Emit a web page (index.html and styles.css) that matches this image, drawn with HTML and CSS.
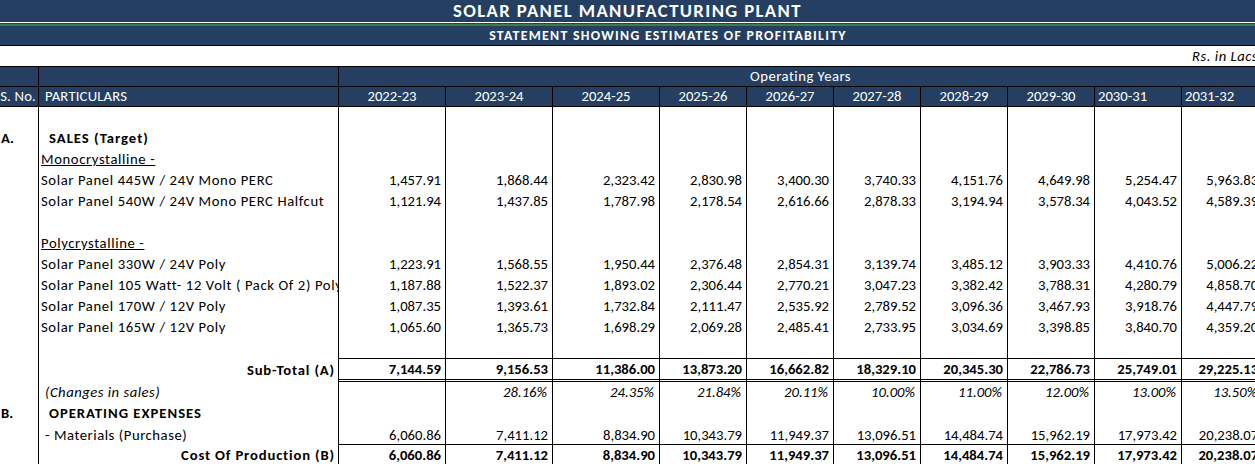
FILE: index.html
```html
<!DOCTYPE html>
<html>
<head>
<meta charset="utf-8">
<link rel="stylesheet" href="styles.css">
</head>
<body>
<div class="title">SOLAR PANEL MANUFACTURING PLANT</div>
<div class="gap"></div>
<div class="subtitle">STATEMENT SHOWING ESTIMATES OF PROFITABILITY</div>
<div class="units">Rs. in Lacs</div>
<table class="sheet">
<colgroup>
<col class="c-sno"><col class="c-part"><col class="c-w"><col class="c-w"><col class="c-w"><col class="c-n"><col class="c-n"><col class="c-n"><col class="c-n"><col class="c-n"><col class="c-n"><col class="c-last">
</colgroup>
<thead>
<tr class="h1">
<th class="vb"></th><th class="vb"></th><th colspan="10" class="oy">Operating Years</th>
</tr>
<tr class="h2">
<th class="vb sno">S. No.</th><th class="vb part">PARTICULARS</th>
<th class="vb">2022-23</th><th class="vb">2023-24</th><th class="vb">2024-25</th><th class="vb">2025-26</th><th class="vb">2026-27</th><th class="vb">2027-28</th><th class="vb">2028-29</th><th class="vb">2029-30</th><th class="vb left">2030-31</th><th class="left">2031-32</th>
</tr>
</thead>
<tbody>
<tr class="r"><td class="idx"></td><td class="lbl">&nbsp;</td><td></td><td></td><td></td><td></td><td></td><td></td><td></td><td></td><td></td><td class="end"></td></tr>
<tr class="r"><td class="idx">A.</td><td class="lbl head">SALES (Target)</td><td></td><td></td><td></td><td></td><td></td><td></td><td></td><td></td><td></td><td class="end"></td></tr>
<tr class="r"><td class="idx"></td><td class="lbl"><u>Monocrystalline -</u></td><td></td><td></td><td></td><td></td><td></td><td></td><td></td><td></td><td></td><td class="end"></td></tr>
<tr class="r"><td class="idx"></td><td class="lbl">Solar Panel 445W / 24V Mono PERC</td><td>1,457.91</td><td>1,868.44</td><td>2,323.42</td><td>2,830.98</td><td>3,400.30</td><td>3,740.33</td><td>4,151.76</td><td>4,649.98</td><td>5,254.47</td><td class="end">5,963.83</td></tr>
<tr class="r"><td class="idx"></td><td class="lbl">Solar Panel 540W / 24V Mono PERC Halfcut</td><td>1,121.94</td><td>1,437.85</td><td>1,787.98</td><td>2,178.54</td><td>2,616.66</td><td>2,878.33</td><td>3,194.94</td><td>3,578.34</td><td>4,043.52</td><td class="end">4,589.39</td></tr>
<tr class="r"><td class="idx"></td><td class="lbl">&nbsp;</td><td></td><td></td><td></td><td></td><td></td><td></td><td></td><td></td><td></td><td class="end"></td></tr>
<tr class="r"><td class="idx"></td><td class="lbl"><u>Polycrystalline -</u></td><td></td><td></td><td></td><td></td><td></td><td></td><td></td><td></td><td></td><td class="end"></td></tr>
<tr class="r"><td class="idx"></td><td class="lbl">Solar Panel 330W / 24V Poly</td><td>1,223.91</td><td>1,568.55</td><td>1,950.44</td><td>2,376.48</td><td>2,854.31</td><td>3,139.74</td><td>3,485.12</td><td>3,903.33</td><td>4,410.76</td><td class="end">5,006.22</td></tr>
<tr class="r"><td class="idx"></td><td class="lbl">Solar Panel 105 Watt- 12 Volt ( Pack Of 2) Poly</td><td>1,187.88</td><td>1,522.37</td><td>1,893.02</td><td>2,306.44</td><td>2,770.21</td><td>3,047.23</td><td>3,382.42</td><td>3,788.31</td><td>4,280.79</td><td class="end">4,858.70</td></tr>
<tr class="r"><td class="idx"></td><td class="lbl">Solar Panel 170W / 12V Poly</td><td>1,087.35</td><td>1,393.61</td><td>1,732.84</td><td>2,111.47</td><td>2,535.92</td><td>2,789.52</td><td>3,096.36</td><td>3,467.93</td><td>3,918.76</td><td class="end">4,447.79</td></tr>
<tr class="r"><td class="idx"></td><td class="lbl">Solar Panel 165W / 12V Poly</td><td>1,065.60</td><td>1,365.73</td><td>1,698.29</td><td>2,069.28</td><td>2,485.41</td><td>2,733.95</td><td>3,034.69</td><td>3,398.85</td><td>3,840.70</td><td class="end">4,359.20</td></tr>
<tr class="r20"><td class="idx"></td><td class="lbl">&nbsp;</td><td></td><td></td><td></td><td></td><td></td><td></td><td></td><td></td><td></td><td class="end"></td></tr>
<tr class="sub"><td class="idx"></td><td class="lbl total">Sub-Total (A)</td><td>7,144.59</td><td>9,156.53</td><td>11,386.00</td><td>13,873.20</td><td>16,662.82</td><td>18,329.10</td><td>20,345.30</td><td>22,786.73</td><td>25,749.01</td><td class="end">29,225.13</td></tr>
<tr class="r pct"><td class="idx"></td><td class="lbl note">(Changes in sales)</td><td></td><td>28.16%</td><td>24.35%</td><td>21.84%</td><td>20.11%</td><td>10.00%</td><td>11.00%</td><td>12.00%</td><td>13.00%</td><td class="end">13.50%</td></tr>
<tr class="r"><td class="idx">B.</td><td class="lbl head">OPERATING EXPENSES</td><td></td><td></td><td></td><td></td><td></td><td></td><td></td><td></td><td></td><td class="end"></td></tr>
<tr class="r20 low"><td class="idx"></td><td class="lbl ind">- Materials (Purchase)</td><td>6,060.86</td><td>7,411.12</td><td>8,834.90</td><td>10,343.79</td><td>11,949.37</td><td>13,096.51</td><td>14,484.74</td><td>15,962.19</td><td>17,973.42</td><td class="end">20,238.07</td></tr>
<tr class="cost"><td class="idx"></td><td class="lbl total">Cost Of Production (B)</td><td>6,060.86</td><td>7,411.12</td><td>8,834.90</td><td>10,343.79</td><td>11,949.37</td><td>13,096.51</td><td>14,484.74</td><td>15,962.19</td><td>17,973.42</td><td class="end">20,238.07</td></tr>
</tbody>
</table>
</body>
</html>
```
FILE: styles.css
```css
html, body {
  margin: 0;
  padding: 0;
  overflow: hidden;
  background: #fff;
}
body {
  width: 1255px;
  font-family: Carlito, Lato, "Liberation Sans", sans-serif;
  font-size: 14.67px;
  color: #000;
}
.title {
  background: #243f61;
  color: #fff;
  font-weight: 700;
  font-size: 18.67px;
  letter-spacing: 1.4px;
  height: 22px;
  line-height: 22px;
  text-align: center;
  border-bottom: 1px solid #fff;
}
.gap {
  height: 1px;
  background: #243f61;
}
.subtitle {
  background: #243f61;
  color: #fff;
  font-weight: 700;
  font-size: 13.8px;
  letter-spacing: 1.3px;
  height: 19px;
  line-height: 19px;
  text-align: center;
  padding-left: 81px;
  border-top: 2px solid #3b7d45;
  border-bottom: 1px solid #000;
}
.units {
  height: 20px;
  line-height: 20px;
  font-style: italic;
  letter-spacing: 0.5px;
  text-align: right;
  margin-right: -3px;
  white-space: nowrap;
}
.sheet {
  margin-left: -8px;
  border-collapse: separate;
  border-spacing: 0;
  table-layout: fixed;
  width: 1270px;
}
.c-sno { width: 47px; }
.c-part { width: 300px; }
.c-w { width: 107px; }
.c-n { width: 87px; }
.c-last { width: 80px; }
.sheet th, .sheet td {
  padding: 0;
  box-sizing: border-box;
  white-space: nowrap;
  overflow: hidden;
  vertical-align: middle;
}
.sheet th {
  background: #243f61;
  color: #fff;
  font-weight: 400;
  text-align: center;
  border-bottom: 1px solid #000;
}
.h1 th {
  line-height: 19px;
  border-top: 1px solid #000;
}
.h1 th.oy { letter-spacing: 0.5px; }
.h2 th { line-height: 19px; }
.sheet th.vb { border-right: 1px solid #000; }
.sheet th.sno { text-align: right; padding-right: 2px; letter-spacing: 0.2px; }
.sheet th.part { text-align: left; padding-left: 6px; letter-spacing: 0.2px; }
.sheet th.left { text-align: left; padding-left: 3px; }
.sheet td {
  border-right: 1px solid #000;
  text-align: right;
  padding-right: 4px;
}
.sheet td.end { border-right: 0; }
.r td { line-height: 21px; }
.r20 td { line-height: 20px; }
.low td { padding-top: 2px; line-height: 18px; }
.sheet td.idx {
  text-align: left;
  font-weight: 700;
  padding-left: 9px;
  padding-right: 0;
}
.sheet td.lbl {
  text-align: left;
  padding-left: 2px;
  padding-right: 0;
  letter-spacing: 0.62px;
  text-overflow: clip;
}
.sheet td.lbl.head { font-weight: 700; padding-left: 10px; letter-spacing: 1px; }
.sheet td.lbl.note { font-style: italic; padding-left: 6px; letter-spacing: 0.5px; }
.sheet td.lbl.ind { padding-left: 6px; letter-spacing: 0.55px; }
.sheet td.lbl.total {
  font-weight: 700;
  text-align: right;
  padding-right: 3px;
  letter-spacing: 0.85px;
}
.sub td {
  line-height: 20px;
  font-weight: 700;
}
.sub td:nth-child(n+3) {
  border-top: 1px solid #000;
  border-bottom: 3px double #000;
}
.pct td { font-style: italic; padding-right: 5px; }
.cost td {
  line-height: 20px;
  font-weight: 700;
}
.cost td:nth-child(n+3) { border-top: 1px solid #000; }
```
